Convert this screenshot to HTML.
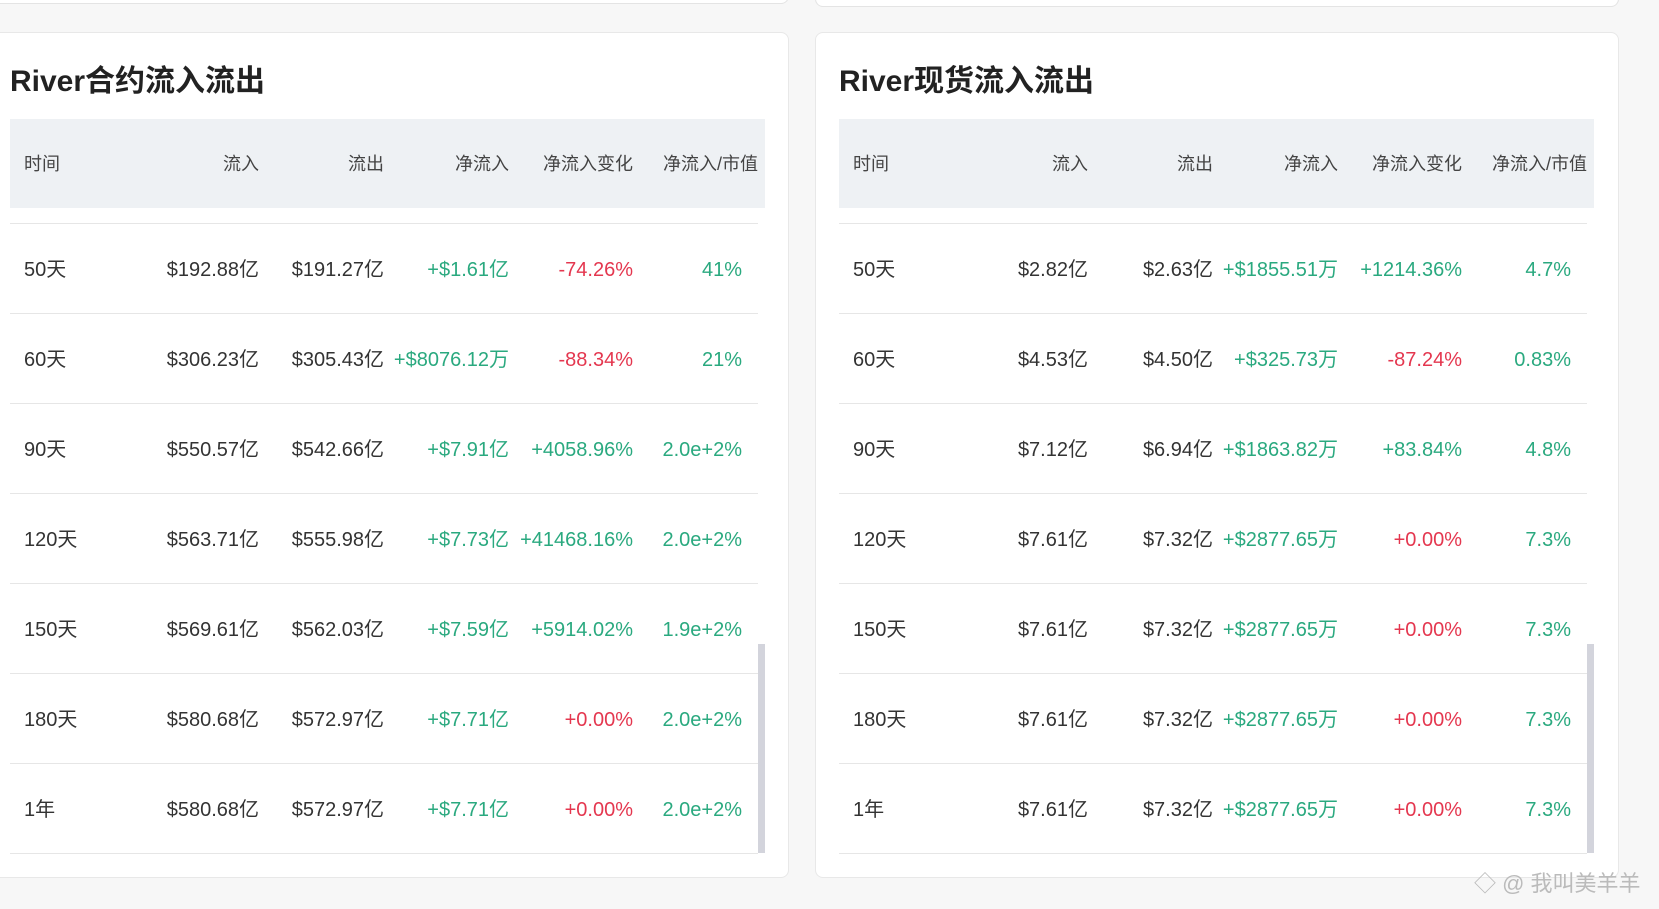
<!DOCTYPE html>
<html><head><meta charset="utf-8"><style>
*{margin:0;padding:0;box-sizing:border-box}
body{width:1659px;height:909px;background:#f7f7f7;position:relative;overflow:hidden;font-family:"Liberation Sans","Noto Sans CJK SC",sans-serif;color:#333}
.top{position:absolute;top:-20px;height:24px;background:#fff;border:1px solid #e4e4e4;border-radius:8px}
.card{position:absolute;top:32px;height:846px;background:#fff;border:1px solid #e8e8e8;border-radius:8px}
.title{position:absolute;top:56px;font-size:30px;font-weight:bold;color:#222}
.hd{position:absolute;top:119px;height:89px;width:755px;background:#eef1f4}
.t{position:absolute;font-size:20px;white-space:nowrap;line-height:24px}
.h{font-size:18px;color:#444}
.ln{position:absolute;height:1px;width:748px;background:#e6e6e6}
.g{color:#2aa97f}.r{color:#e4374f}
.sb{position:absolute;top:644px;width:7px;height:209px;background:#d3d4dc}
.wm{position:absolute;left:1474px;top:866px;font-size:22px;color:#bbb}
</style></head><body>
<div class="top" style="left:-10px;width:799px"></div>
<div class="top" style="left:815px;width:804px;height:27px"></div>
<div class="card" style="left:-10px;width:799px"></div>
<div class="card" style="left:815px;width:804px"></div>
<div id="L"></div>
<div class="wm">◇ @ 我叫美羊羊</div>
<script>
function build(ox,title,rows){
 let h='';
 h+=`<div class="title" style="left:${ox+10}px">${title}</div>`;
 h+=`<div class="hd" style="left:${ox+10}px"></div>`;
 const R=[259,384,509,633,758];
 const hy=152;
 h+=`<div class="t h" style="left:${ox+24}px;top:${hy}px">时间</div>`;
 ['流入','流出','净流入','净流入变化','净流入/市值'].forEach((s,i)=>{
  h+=`<div class="t h" style="right:${1659-ox-R[i]}px;top:${hy}px">${s}</div>`;});
 const VR=[259,384,509,633,742];
 for(let k=0;k<8;k++) h+=`<div class="ln" style="left:${ox+10}px;top:${223+90*k}px"></div>`;
 rows.forEach((r,k)=>{
  const y=258+90*k;
  h+=`<div class="t" style="left:${ox+24}px;top:${y}px">${r[0]}</div>`;
  for(let i=1;i<6;i++){
   let v=r[i],c='';
   if(i>=3){c=(i==4&&(v.startsWith('-')||v=='+0.00%'))?'r':'g';}
   h+=`<div class="t ${c}" style="right:${1659-ox-VR[i-1]}px;top:${y}px">${v}</div>`;
  }
 });
 h+=`<div class="sb" style="left:${ox+758}px"></div>`;
 return h;
}
const A=[
['50天','$192.88亿','$191.27亿','+$1.61亿','-74.26%','41%'],
['60天','$306.23亿','$305.43亿','+$8076.12万','-88.34%','21%'],
['90天','$550.57亿','$542.66亿','+$7.91亿','+4058.96%','2.0e+2%'],
['120天','$563.71亿','$555.98亿','+$7.73亿','+41468.16%','2.0e+2%'],
['150天','$569.61亿','$562.03亿','+$7.59亿','+5914.02%','1.9e+2%'],
['180天','$580.68亿','$572.97亿','+$7.71亿','+0.00%','2.0e+2%'],
['1年','$580.68亿','$572.97亿','+$7.71亿','+0.00%','2.0e+2%']];
const B=[
['50天','$2.82亿','$2.63亿','+$1855.51万','+1214.36%','4.7%'],
['60天','$4.53亿','$4.50亿','+$325.73万','-87.24%','0.83%'],
['90天','$7.12亿','$6.94亿','+$1863.82万','+83.84%','4.8%'],
['120天','$7.61亿','$7.32亿','+$2877.65万','+0.00%','7.3%'],
['150天','$7.61亿','$7.32亿','+$2877.65万','+0.00%','7.3%'],
['180天','$7.61亿','$7.32亿','+$2877.65万','+0.00%','7.3%'],
['1年','$7.61亿','$7.32亿','+$2877.65万','+0.00%','7.3%']];
document.getElementById('L').innerHTML=build(0,'River合约流入流出',A)+build(829,'River现货流入流出',B);
</script>
</body></html>
